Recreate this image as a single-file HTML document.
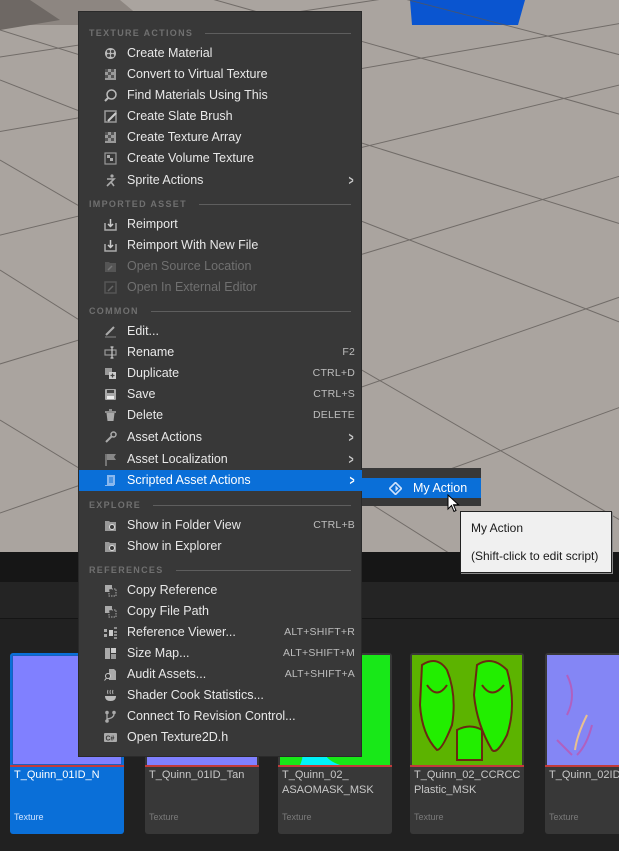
<!DOCTYPE html>
<html><head><meta charset="utf-8"><style>
*{margin:0;padding:0;box-sizing:border-box}
body{width:619px;height:851px;overflow:hidden;background:#1f1f1f;font-family:"Liberation Sans",sans-serif;position:relative}
.abs{position:absolute}
.menu{position:absolute;left:78px;top:11px;width:284px;height:746px;background:#383838;border:1px solid #2a2a2a}
.row{position:absolute;left:0;width:284px;height:21px;line-height:21px;color:#e8e8e8;font-size:12.5px;margin-top:1px}
.row .t{position:absolute;left:48px}
.row .k{position:absolute;right:8px;font-size:10.5px;color:#bdbdbd;letter-spacing:.2px}
.row .a{position:absolute;right:8px;top:0;color:#c8c8c8;font-size:14px;font-weight:bold;transform:scaleX(.6)}
.row .i{position:absolute;left:25px;top:4px;width:13px;height:13px}
.row.dis{color:#707070}
.hl{background:#0a6fd8;color:#fff}
.hdr{position:absolute;left:10px;width:262px;height:12px;font-size:9px;font-weight:bold;color:#707070;letter-spacing:1.3px;line-height:12px;display:flex;align-items:center;margin-top:1px}
.hdr i{flex:1;height:1px;background:#5e5e5e;margin-left:12px}
.card{position:absolute;top:653px;width:114px;height:181px;background:#383838;border-radius:3px;overflow:hidden}
.card .img{position:absolute;left:2px;top:2px;width:110px;height:110px}
.card .red{position:absolute;left:0;top:112px;width:114px;height:2px;background:#c23a3a}
.card .n{position:absolute;left:4px;top:115px;font-size:11px;color:#c8c8c8;line-height:15px;width:112px}
.card .ty{position:absolute;left:4px;top:159px;font-size:9px;color:#7a7a7a}
</style></head><body>
<svg class="abs" style="left:0;top:0" width="619" height="552" viewBox="0 0 619 552">
<rect width="619" height="552" fill="#aaa49f"/>
<polygon points="0,0 120,0 150,25 0,25" fill="#8d8681"/>
<polygon points="0,0 30,0 60,20 0,30" fill="#6e6864"/>
<polygon points="410,0 525,0 518,25 412,25" fill="#0a55d0"/>
<g stroke="#5a5552" stroke-width="1" fill="none" opacity=".7">
<path d="M-20,60 L640,-40"/><path d="M-20,135 L640,20"/><path d="M-20,240 L640,80"/><path d="M-20,370 L640,170"/><path d="M-20,520 L640,290"/><path d="M200,560 L640,400"/>
<path d="M0,30 L640,230"/><path d="M0,80 L640,330"/><path d="M0,160 L620,520"/><path d="M0,270 L460,560"/><path d="M0,420 L230,560"/><path d="M180,-10 L640,120"/><path d="M370,-10 L640,60"/>
</g>
</svg>
<div class="abs" style="left:0;top:552px;width:619px;height:30px;background:#161616"></div>
<div class="abs" style="left:0;top:582px;width:619px;height:36px;background:#242424"></div>
<div class="abs" style="left:0;top:618px;width:619px;height:1px;background:#151515"></div>
<div class="abs" style="left:0;top:619px;width:619px;height:232px;background:#212121"></div>

<div class="card" style="left:10px;background:#0a6fd8"><div class="img" style="background:#8080ff;border:1px solid #1a60c0"></div><div class="red"></div><div class="n" style="color:#fff">T_Quinn_01ID_N</div><div class="ty" style="color:#d0e4ff">Texture</div></div>
<div class="card" style="left:145px"><div class="img" style="background:#8080ff"></div><div class="red"></div><div class="n">T_Quinn_01ID_Tan</div><div class="ty">Texture</div></div>
<div class="card" style="left:278px"><div class="img" style="background:#00f0ff"><svg width="110" height="110"><rect width="110" height="110" fill="#00f2f8"/><path d="M40,0 Q70,40 55,70 Q30,100 60,110 L110,110 L110,0Z" fill="#18e818"/><path d="M0,80 Q30,90 20,110 L0,110Z" fill="#18e818"/><path d="M20,20 Q40,30 30,60" stroke="#1a9a1a" stroke-width="3" fill="none"/></svg></div><div class="red"></div><div class="n">T_Quinn_02_<br>ASAOMASK_MSK</div><div class="ty">Texture</div></div>
<div class="card" style="left:410px"><div class="img" style="background:#5cb300"><svg width="110" height="110"><path d="M10,10 Q25,0 35,15 Q45,40 40,70 Q30,95 25,95 Q10,80 8,50Z M65,10 Q80,0 95,15 Q105,50 95,80 Q85,100 80,95 Q65,70 62,40Z M45,75 Q58,68 70,75 L70,105 L45,105Z" fill="#22ee00" stroke="#6a2a10" stroke-width="2"/><path d="M15,30 Q25,45 35,30 M70,30 Q80,45 92,30" stroke="#6a2a10" stroke-width="2" fill="none"/></svg></div><div class="red"></div><div class="n">T_Quinn_02_CCRCC<br>Plastic_MSK</div><div class="ty">Texture</div></div>
<div class="card" style="left:545px"><div class="img" style="background:#8486f5"><svg width="110" height="110"><path d="M20,20 Q30,40 20,60 M45,70 Q40,90 30,100 M10,85 Q20,95 25,100" stroke="#b060c0" stroke-width="2" fill="none"/><path d="M40,60 Q30,80 28,95" stroke="#e8c090" stroke-width="2" fill="none"/></svg></div><div class="red"></div><div class="n">T_Quinn_02ID_N</div><div class="ty">Texture</div></div>

<div class="menu">
<div class="hdr" style="top:14px">TEXTURE ACTIONS<i></i></div>
<div class="row" style="top:30px"><svg class="i" viewBox="0 0 13 13"><circle cx="6.5" cy="6.5" r="5.5" fill="#bbb"/><circle cx="4.5" cy="4.5" r="1.6" fill="#444"/><circle cx="8.5" cy="4.5" r="1.6" fill="#444"/><circle cx="4.5" cy="8.5" r="1.6" fill="#444"/><circle cx="8.5" cy="8.5" r="1.6" fill="#444"/></svg><span class="t">Create Material</span></div>
<div class="row" style="top:51px"><svg class="i" viewBox="0 0 13 13"><rect x="1" y="1" width="11" height="11" fill="#999"/><path d="M1,1h3v3h-3zM7,1h3v3h-3zM4,4h3v3h-3zM1,7h3v3h-3zM7,7h3v3h-3z" fill="#555"/></svg><span class="t">Convert to Virtual Texture</span></div>
<div class="row" style="top:72px"><svg class="i" viewBox="0 0 13 13"><circle cx="7.5" cy="5.5" r="4.5" fill="none" stroke="#bbb" stroke-width="1.5"/><path d="M4,9L1,12" stroke="#bbb" stroke-width="2"/></svg><span class="t">Find Materials Using This</span></div>
<div class="row" style="top:93px"><svg class="i" viewBox="0 0 13 13"><rect x="1" y="1" width="11" height="11" fill="none" stroke="#999" stroke-width="1.5"/><path d="M4,11L12,3" stroke="#ccc" stroke-width="2"/></svg><span class="t">Create Slate Brush</span></div>
<div class="row" style="top:114px"><svg class="i" viewBox="0 0 13 13"><rect x="1" y="1" width="11" height="11" fill="#999"/><path d="M1,1h3v3h-3zM7,1h3v3h-3zM4,4h3v3h-3zM1,7h3v3h-3zM7,7h3v3h-3z" fill="#555"/></svg><span class="t">Create Texture Array</span></div>
<div class="row" style="top:135px"><svg class="i" viewBox="0 0 13 13"><rect x="1" y="1" width="11" height="11" fill="none" stroke="#999" stroke-width="1.2"/><path d="M3,3h3v3h-3zM6,6h3v3h-3z" fill="#aaa"/></svg><span class="t">Create Volume Texture</span></div>
<div class="row" style="top:157px"><svg class="i" viewBox="0 0 13 13"><circle cx="8" cy="2" r="1.6" fill="#aaa"/><path d="M3,5h7l-3,3l3,4M7,8l-4,4" stroke="#aaa" stroke-width="1.6" fill="none"/></svg><span class="t">Sprite Actions</span><span class="a">&gt;</span></div>
<div class="hdr" style="top:185px">IMPORTED ASSET<i></i></div>
<div class="row" style="top:201px"><svg class="i" viewBox="0 0 13 13"><path d="M1,5v7h11v-7" stroke="#aaa" stroke-width="1.5" fill="none"/><path d="M6.5,1v7M4,6l2.5,2.5l2.5,-2.5" stroke="#ccc" stroke-width="1.5" fill="none"/></svg><span class="t">Reimport</span></div>
<div class="row" style="top:222px"><svg class="i" viewBox="0 0 13 13"><path d="M1,5v7h11v-7" stroke="#aaa" stroke-width="1.5" fill="none"/><path d="M6.5,1v7M4,6l2.5,2.5l2.5,-2.5" stroke="#ccc" stroke-width="1.5" fill="none"/></svg><span class="t">Reimport With New File</span></div>
<div class="row dis" style="top:243px"><svg class="i" viewBox="0 0 13 13"><path d="M1,2h4l1,1h6v9h-11z" fill="#555"/><path d="M4,10l4,-4" stroke="#777" stroke-width="1.5"/></svg><span class="t">Open Source Location</span></div>
<div class="row dis" style="top:264px"><svg class="i" viewBox="0 0 13 13"><rect x="1" y="1" width="11" height="11" fill="none" stroke="#555" stroke-width="1.5"/><path d="M4,10l5,-5" stroke="#666" stroke-width="1.5"/></svg><span class="t">Open In External Editor</span></div>
<div class="hdr" style="top:292px">COMMON<i></i></div>
<div class="row" style="top:308px"><svg class="i" viewBox="0 0 13 13"><path d="M2,10L10,2" stroke="#aaa" stroke-width="2"/><path d="M1,12h11" stroke="#888" stroke-width="1"/></svg><span class="t">Edit...</span></div>
<div class="row" style="top:329px"><svg class="i" viewBox="0 0 13 13"><rect x="1" y="4" width="11" height="5" fill="none" stroke="#999" stroke-width="1.2"/><path d="M8,1v11M6.5,1h3M6.5,12h3" stroke="#ccc" stroke-width="1.2"/></svg><span class="t">Rename</span><span class="k">F2</span></div>
<div class="row" style="top:350px"><svg class="i" viewBox="0 0 13 13"><rect x="1" y="1" width="7" height="7" fill="#999"/><rect x="5" y="5" width="7" height="7" fill="#ccc"/><path d="M8.5,6.5v4M6.5,8.5h4" stroke="#444" stroke-width="1.2"/></svg><span class="t">Duplicate</span><span class="k">CTRL+D</span></div>
<div class="row" style="top:371px"><svg class="i" viewBox="0 0 13 13"><rect x="1" y="1" width="11" height="11" rx="1" fill="#aaa"/><rect x="3" y="2" width="7" height="3" fill="#444"/><rect x="3" y="8" width="7" height="3" fill="#eee"/></svg><span class="t">Save</span><span class="k">CTRL+S</span></div>
<div class="row" style="top:392px"><svg class="i" viewBox="0 0 13 13"><path d="M1,3h11M5,1h3" stroke="#aaa" stroke-width="1.4"/><path d="M2.5,4h8l-1,8h-6z" fill="#aaa"/></svg><span class="t">Delete</span><span class="k">DELETE</span></div>
<div class="row" style="top:414px"><svg class="i" viewBox="0 0 13 13"><path d="M2,11L8,5" stroke="#aaa" stroke-width="2"/><circle cx="9.5" cy="3.5" r="2.5" fill="none" stroke="#aaa" stroke-width="1.5"/></svg><span class="t">Asset Actions</span><span class="a">&gt;</span></div>
<div class="row" style="top:436px"><svg class="i" viewBox="0 0 13 13"><path d="M2,1v12" stroke="#888" stroke-width="1.5"/><path d="M3,1h9l-2,3l2,3h-9z" fill="#888"/></svg><span class="t">Asset Localization</span><span class="a">&gt;</span></div>
<div class="row hl" style="top:457px;width:285px"><svg class="i" viewBox="0 0 13 13"><path d="M3,1h8v10h-8z" fill="#8ab8ee"/><path d="M1,11h9v1h-9z" fill="#8ab8ee"/><path d="M5,4h4M5,6h4M5,8h4" stroke="#0a6fd8"/></svg><span class="t">Scripted Asset Actions</span><span class="a" style="color:#fff">&gt;</span></div>
<div class="hdr" style="top:486px">EXPLORE<i></i></div>
<div class="row" style="top:502px"><svg class="i" viewBox="0 0 13 13"><path d="M1,2h4l1,1h6v9h-11z" fill="#999"/><circle cx="8" cy="8" r="2.5" fill="#383838" stroke="#ddd"/></svg><span class="t">Show in Folder View</span><span class="k">CTRL+B</span></div>
<div class="row" style="top:523px"><svg class="i" viewBox="0 0 13 13"><path d="M1,2h4l1,1h6v9h-11z" fill="#999"/><circle cx="8" cy="8" r="2.5" fill="#383838" stroke="#ddd"/></svg><span class="t">Show in Explorer</span></div>
<div class="hdr" style="top:551px">REFERENCES<i></i></div>
<div class="row" style="top:567px"><svg class="i" viewBox="0 0 13 13"><rect x="1" y="1" width="7" height="7" fill="#aaa"/><rect x="5" y="5" width="7" height="7" fill="#383838" stroke="#aaa" stroke-dasharray="1.5 1"/></svg><span class="t">Copy Reference</span></div>
<div class="row" style="top:588px"><svg class="i" viewBox="0 0 13 13"><rect x="1" y="1" width="7" height="7" fill="#aaa"/><rect x="5" y="5" width="7" height="7" fill="#383838" stroke="#aaa" stroke-dasharray="1.5 1"/></svg><span class="t">Copy File Path</span></div>
<div class="row" style="top:609px"><svg class="i" viewBox="0 0 13 13"><rect x="0" y="3" width="3" height="3" fill="#aaa"/><rect x="0" y="8" width="3" height="3" fill="#aaa"/><rect x="5" y="4" width="4" height="6" fill="#ccc"/><path d="M10,2h3M10,6h3M10,9h3M10,12h3" stroke="#aaa" stroke-width="1.5"/></svg><span class="t">Reference Viewer...</span><span class="k">ALT+SHIFT+R</span></div>
<div class="row" style="top:630px"><svg class="i" viewBox="0 0 13 13"><rect x="1" y="1" width="5" height="11" fill="#aaa"/><rect x="7" y="1" width="5" height="5" fill="#ccc"/><rect x="7" y="7" width="5" height="5" fill="#999"/></svg><span class="t">Size Map...</span><span class="k">ALT+SHIFT+M</span></div>
<div class="row" style="top:651px"><svg class="i" viewBox="0 0 13 13"><path d="M5,1h5l2,2v9h-7z" fill="#aaa"/><circle cx="4" cy="8" r="2.5" fill="#383838" stroke="#ccc"/><path d="M2.5,10L0.5,12.5" stroke="#ccc"/></svg><span class="t">Audit Assets...</span><span class="k">ALT+SHIFT+A</span></div>
<div class="row" style="top:672px"><svg class="i" viewBox="0 0 13 13"><path d="M4,1q-1,2 0,4M6.5,1q-1,2 0,4M9,1q-1,2 0,4" stroke="#aaa" fill="none"/><path d="M1,7h11q0,5-5.5,5q-5.5,0-5.5-5z" fill="#bbb"/></svg><span class="t">Shader Cook Statistics...</span></div>
<div class="row" style="top:693px"><svg class="i" viewBox="0 0 13 13"><circle cx="3" cy="2.5" r="1.8" fill="#aaa"/><circle cx="3" cy="11" r="1.8" fill="#aaa"/><circle cx="10" cy="2.5" r="1.8" fill="#aaa"/><path d="M3,3v8M10,4q0,4-7,5" stroke="#aaa" stroke-width="1.3" fill="none"/></svg><span class="t">Connect To Revision Control...</span></div>
<div class="row" style="top:714px"><svg class="i" viewBox="0 0 13 13"><rect x="0" y="2" width="13" height="9" rx="1" fill="#aaa"/><text x="1.5" y="9.5" font-size="7" font-family="Liberation Sans" font-weight="bold" fill="#383838">C#</text></svg><span class="t">Open Texture2D.h</span></div>
</div>

<div class="abs" style="left:362px;top:468px;width:119px;height:38px;background:#383838"></div>
<div class="abs" style="left:362px;top:478px;width:119px;height:20px;background:#0a6fd8;color:#fff;font-size:12.5px;line-height:20px">
<svg class="abs" style="left:27px;top:4px" width="13" height="13" viewBox="0 0 13 13"><path d="M6.5,0.5L12.5,6.5L6.5,12.5L0.5,6.5Z" fill="none" stroke="#cfe2fb" stroke-width="1.6"/><path d="M6.5,3.5L9.5,6.5L6.5,9.5Z" fill="#cfe2fb"/></svg>
<span class="abs" style="left:51px;top:0">My Action</span></div>
<svg class="abs" style="left:447px;top:494px" width="14" height="20" viewBox="0 0 14 20"><path d="M1,1L1,15L4.5,11.5L7,17.5L9,16.5L6.5,10.8L11.5,10.8Z" fill="#fff" stroke="#000" stroke-width="1"/></svg>
<div class="abs" style="left:460px;top:511px;width:152px;height:62px;background:#f0f0f0;border:1px solid #222;box-shadow:1px 1px 0 #888;font-size:12px;color:#1a1a1a">
<div class="abs" style="left:10px;top:9px">My Action</div>
<div class="abs" style="left:10px;top:37px">(Shift-click to edit script)</div>
</div>
</body></html>
